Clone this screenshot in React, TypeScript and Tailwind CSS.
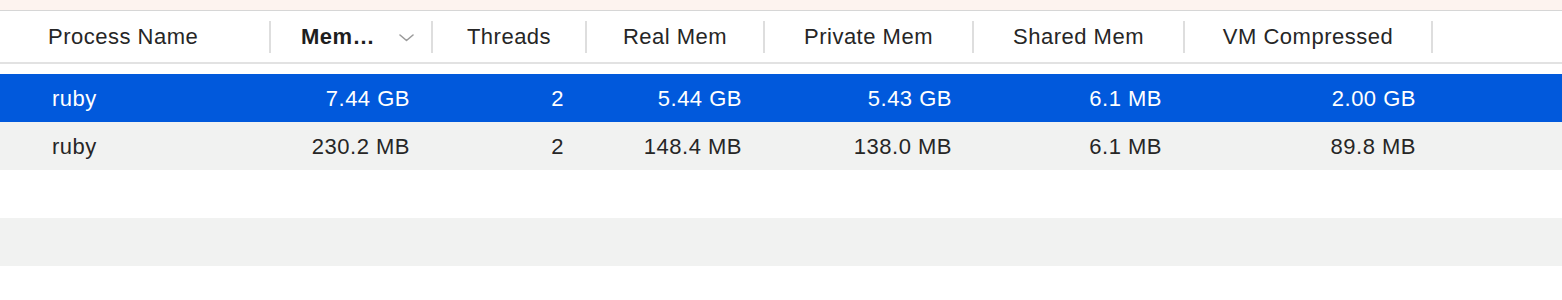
interface Column {
    label: string;
    width: number;
    cellClass: string;
}

const columns: Column[] = [
    { label: 'Process Name', width: 271, cellClass: 'justify-start pl-[52px]' },
    { label: 'Memory', width: 162, cellClass: 'justify-end pr-[23px]' },
    { label: 'Threads', width: 154, cellClass: 'justify-end pr-[23px]' },
    { label: 'Real Mem', width: 178, cellClass: 'justify-end pr-[23px]' },
    { label: 'Private Mem', width: 209, cellClass: 'justify-end pr-[22px]' },
    { label: 'Shared Mem', width: 211, cellClass: 'justify-end pr-[23px]' },
    { label: 'VM Compressed', width: 248, cellClass: 'justify-end pr-[17px]' }
];

const rows: string[][] = [
    ['ruby', '7.44 GB', '2', '5.44 GB', '5.43 GB', '6.1 MB', '2.00 GB'],
    ['ruby', '230.2 MB', '2', '148.4 MB', '138.0 MB', '6.1 MB', '89.8 MB']
];

function SortChevron() {
    return (
        <svg width="15" height="8" viewBox="0 0 15 8" className="ml-auto mr-[17px] mt-[3px]">
            <polyline
                points="1,1 7.5,6.5 14,1"
                fill="none"
                stroke="#9b9b9b"
                strokeWidth={1.6}
                strokeLinecap="round"
                strokeLinejoin="round"
            />
        </svg>
    );
}

function HeaderCell({ col, index }: { col: Column; index: number }) {
    const separator = <div className="h-[32px] w-[2px] shrink-0 bg-[#dedede]" />;

    if (index === 1) {
        return (
            <div className="flex h-full shrink-0 items-center" style={{ width: col.width }}>
                <span className="pl-[30px] font-bold text-[#1e1e1e]">Mem…</span>
                <SortChevron />
                {separator}
            </div>
        );
    }

    return (
        <div className="flex h-full shrink-0 items-center" style={{ width: col.width }}>
            {index === 0 ? (
                <span className="flex-1 pl-[48px] text-left">{col.label}</span>
            ) : (
                <span className="flex-1 text-center">{col.label}</span>
            )}
            {separator}
        </div>
    );
}

export default function App() {
    return (
        <div
            className="h-[300px] w-full overflow-hidden bg-white text-[22px] tracking-[0.5px] text-[#262626]"
            style={{ fontFamily: '"Liberation Sans", Arial, sans-serif' }}
        >
            <div className="h-[10px] border-b border-[#d6d6d6] bg-[#fdf3ef] box-content" />

            {/* Column headers */}
            <div className="flex h-[51px] items-center border-b-2 border-[#e2e2e2] box-content">
                {columns.map((col, i) => (
                    <HeaderCell key={col.label} col={col} index={i} />
                ))}
            </div>

            <div className="h-[10px]" />

            {/* Process rows */}
            {rows.map((row, r) => (
                <div
                    key={r}
                    className={`flex h-[48px] items-center ${r === 0 ? 'bg-[#0159dc] text-white' : 'bg-[#f1f2f1]'}`}
                >
                    {row.map((value, c) => (
                        <div
                            key={c}
                            className={`flex shrink-0 items-center ${columns[c].cellClass}`}
                            style={{ width: columns[c].width }}
                        >
                            {value}
                        </div>
                    ))}
                </div>
            ))}

            {/* Empty striped rows */}
            <div className="h-[48px] bg-white" />
            <div className="h-[48px] bg-[#f1f2f1]" />
        </div>
    );
}
